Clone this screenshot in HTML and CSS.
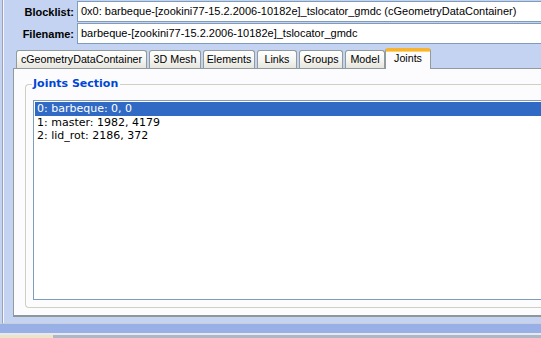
FILE: index.html
```html
<!DOCTYPE html>
<html>
<head>
<meta charset="utf-8">
<link rel="stylesheet" href="styles.css">
</head>
<body>
<div class="screen">
  <div class="outer">
    <div class="field-row first">
      <label class="lbl">Blocklist:</label>
      <div class="input">0x0: barbeque-[zookini77-15.2.2006-10182e]_tslocator_gmdc (cGeometryDataContainer)</div>
    </div>
    <div class="field-row">
      <label class="lbl">Filename:</label>
      <div class="input">barbeque-[zookini77-15.2.2006-10182e]_tslocator_gmdc</div>
    </div>
    <div class="tabs">
      <div class="tab t-geo">cGeometryDataContainer</div>
      <div class="tab t-mesh">3D Mesh</div>
      <div class="tab t-elem">Elements</div>
      <div class="tab t-links">Links</div>
      <div class="tab t-groups">Groups</div>
      <div class="tab t-model">Model</div>
      <div class="tab active t-joints">Joints</div>
    </div>
    <div class="panel">
      <div class="group">
        <div class="group-title">Joints Section</div>
        <div class="listbox">
          <div class="item selected">0: barbeque: 0, 0</div>
          <div class="item">1: master: 1982, 4179</div>
          <div class="item">2: lid_rot: 2186, 372</div>
        </div>
      </div>
    </div>
  </div>
  <div class="band"></div>
  <div class="taskbar">
    <div class="task-left"></div>
    <div class="task-right"></div>
  </div>
</div>
</body>
</html>
```

FILE: styles.css
```css
html, body {
  margin: 0;
  padding: 0;
}
body {
  width: 541px;
  height: 338px;
  overflow: hidden;
  background: #c3d3f1;
  font-family: "Liberation Sans", Arial, sans-serif;
  font-size: 11px;
  color: #000;
}
.screen {
  width: 541px;
  height: 338px;
  display: flex;
  flex-direction: column;
}
.outer {
  margin-left: 2px;
  border-left: 1px solid #9aa3b3;
  border-bottom: 1px solid #c9ced8;
  box-shadow: inset 1px 0 0 #f4f6fb;
  height: 324px;
  flex: none;
  box-sizing: border-box;
  padding: 1px 0 6px 10px;
  display: flex;
  flex-direction: column;
  width: 560px;
  background: #c3d3f1;
}
.field-row {
  display: flex;
  align-items: center;
  height: 21px;
  margin-bottom: 1px;
  flex: none;
}
.lbl {
  width: 62px;
  text-align: right;
  font-weight: bold;
  padding-right: 1px;
  box-sizing: border-box;
  flex: none;
}
.input {
  margin-left: 2px;
  flex: 1;
  height: 21px;
  box-sizing: border-box;
  border: 1px solid #7f9db9;
  background: #fff;
  padding: 0 3px;
  line-height: 19px;
  white-space: nowrap;
  overflow: hidden;
}
.tabs {
  display: flex;
  align-items: flex-end;
  height: 20px;
  margin-top: 3px;
  padding-left: 3px;
  gap: 2px;
  flex: none;
}
.tab {
  height: 18px;
  box-sizing: border-box;
  border: 1px solid #919b9c;
  border-bottom: none;
  border-radius: 3px 3px 0 0;
  background: linear-gradient(#ffffff, #f3f3ef 60%, #e6e5de);
  font-size: 10.7px;
  line-height: 17px;
  text-align: center;
  white-space: nowrap;
  flex: none;
}
.t-geo { width: 131px; }
.t-mesh { width: 52px; }
.t-elem { width: 52px; }
.t-links { width: 40px; }
.t-groups { width: 44px; }
.t-model { width: 40px; }
.tab.active {
  width: 46px;
  height: 21px;
  margin-bottom: -1px;
  margin-left: -2px;
  background: #fcfcfe;
  border-top: 3px solid #f8b431;
  box-shadow: inset 0 1px 0 #ffd36b;
  line-height: 14px;
  position: relative;
  z-index: 1;
}
.panel {
  flex: 1;
  border: 1px solid #919b9c;
  border-right: none;
  border-bottom: 2px solid #8e989a;
  background: #fcfcfe;
  padding: 10px 0 7px 11px;
  display: flex;
  flex-direction: column;
}
.group {
  flex: 1;
  border: 1px solid #d0d0bf;
  border-right: none;
  border-radius: 4px 0 0 4px;
  margin-top: 5px;
  padding: 15px 0 7px 7px;
  display: flex;
  flex-direction: column;
  position: relative;
}
.group-title {
  position: absolute;
  top: -9px;
  left: 6px;
  padding: 0 2px 0 1px;
  background: #fcfcfe;
  color: #0046d5;
  font-family: "DejaVu Sans", Verdana, sans-serif;
  font-weight: bold;
  font-size: 11px;
  line-height: 16px;
}
.listbox {
  flex: 1;
  border: 1px solid #7f9db9;
  border-right: none;
  background: #fff;
  padding: 1px 0 0 1px;
  font-family: "DejaVu Sans", Verdana, sans-serif;
  font-size: 11px;
}
.item {
  height: 13px;
  line-height: 13px;
  padding-left: 2px;
  white-space: nowrap;
}
.item.selected {
  background: #316ac5;
  color: #fff;
  height: 14px;
  line-height: 14px;
}
.band {
  height: 9px;
  background: #99b0e6;
  border-bottom: 2px solid #e6e9ef;
  flex: none;
}
.taskbar {
  flex: 1;
  display: flex;
}
.task-left {
  width: 53px;
  background: #ece3c9;
}
.task-right {
  flex: 1;
  background: #aeb7c6;
}
```
